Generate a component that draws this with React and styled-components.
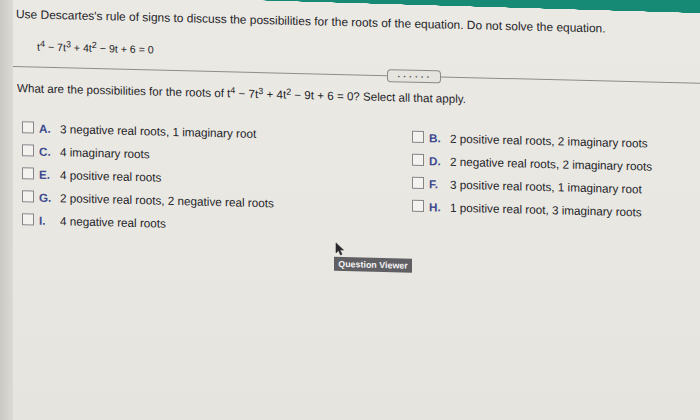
import React from "react";
import styled, { createGlobalStyle } from "styled-components";

const Global = createGlobalStyle`
  html, body { margin: 0; padding: 0; }
  body {
    width: 700px;
    height: 420px;
    overflow: hidden;
    background: #e8e6e1;
    font-family: "Liberation Sans", Arial, sans-serif;
    color: #242428;
  }
`;

const Screen = styled.div`
  display: flex;
  width: 700px;
  height: 420px;
`;

const Edge = styled.div`
  width: 13px;
  flex-shrink: 0;
  background: linear-gradient(90deg, #cbc9c4, #dcdad5);
`;

// photo of a monitor: header strip is cut off at an angle on the right
const Page = styled.div`
  flex: 1;
  overflow: hidden;
  background:
    linear-gradient(to bottom left, #178a76 50%, transparent 50.5%) top right / 450px 13px no-repeat,
    linear-gradient(180deg, #ebe9e4 0%, #e9e7e2 60%, #e6e4df 100%);
`;

const Content = styled.div`
  display: flex;
  flex-direction: column;
  padding: 6px 0 0 3px;
  transform: skewY(1.4deg);
  transform-origin: 0 0;
`;

const Prompt = styled.p`
  margin: 0;
  font-size: 11.95px;
  line-height: 16px;
`;

const Equation = styled.div`
  margin: 17px 0 0 21px;
  font-size: 10.6px;
  line-height: 14px;
  sup { font-size: 9px; vertical-align: 4px; line-height: 0; }
`;

const DividerRow = styled.div`
  display: flex;
  align-items: center;
  margin: 7px 0 0 -3px;
`;

const Rule = styled.div`
  flex: ${(p) => p.grow || 1};
  height: 1px;
  background: #8d8c89;
`;

const Pill = styled.div`
  width: 52px;
  height: 11px;
  border: 1px solid #8b8a88;
  border-radius: 4px;
  background: #e6e4df;
  display: flex;
  align-items: center;
  justify-content: center;
  font-size: 6px;
  color: #555;
  letter-spacing: 1px;
  line-height: 6px;
`;

const Question = styled.p`
  margin: 8px 0 0 1px;
  font-size: 11.6px;
  line-height: 14px;
  sup { font-size: 9px; vertical-align: 4px; line-height: 0; }
`;

const Choices = styled.div`
  display: grid;
  grid-template-columns: 390px 1fr;
  row-gap: 9px;
  margin: 25px 0 0 6px;
`;

const Choice = styled.label`
  display: flex;
  align-items: center;
  font-size: 11.7px;
  height: 14px;
  grid-column: ${(p) => p.col};
`;

const Box = styled.span`
  width: 10px;
  height: 10px;
  border: 1px solid #86868a;
  background: #f3f2ef;
  margin-right: 5px;
  flex-shrink: 0;
`;

const Letter = styled.span`
  width: 21px;
  font-weight: bold;
  color: #3d4a8e;
`;

const ViewerArea = styled.div`
  display: flex;
  justify-content: center;
  margin-top: 8px;
  padding-left: 30px;
`;

const Viewer = styled.div`
  display: flex;
  flex-direction: column;
  align-items: flex-start;
`;

const Cursor = styled.svg`
  width: 10px;
  height: 14px;
  margin: 0 0 1px 1px;
`;

const ViewerTag = styled.div`
  background: #606064;
  color: #f4f4f4;
  font-size: 8.9px;
  font-weight: bold;
  padding: 2.5px 4px;
  line-height: 9px;
`;

const rows = [
  [["A.", "3 negative real roots, 1 imaginary root"], ["B.", "2 positive real roots, 2 imaginary roots"]],
  [["C.", "4 imaginary roots"], ["D.", "2 negative real roots, 2 imaginary roots"]],
  [["E.", "4 positive real roots"], ["F.", "3 positive real roots, 1 imaginary root"]],
  [["G.", "2 positive real roots, 2 negative real roots"], ["H.", "1 positive real root, 3 imaginary roots"]],
  [["I.", "4 negative real roots"]],
];

const Poly = () => (
  <>
    t<sup>4</sup> − 7t<sup>3</sup> + 4t<sup>2</sup> − 9t + 6 = 0
  </>
);

export default function App() {
  return (
    <Screen>
      <Global />
      <Edge />
      <Page>
        <Content>
          <Prompt>
            Use Descartes's rule of signs to discuss the possibilities for the roots of the equation. Do not solve the equation.
          </Prompt>
          <Equation>
            <Poly />
          </Equation>
          <DividerRow>
            <Rule grow={375} />
            <Pill>• • • • • •</Pill>
            <Rule grow={260} />
          </DividerRow>
          <Question>
            What are the possibilities for the roots of <Poly />? Select all that apply.
          </Question>
          <Choices>
            {rows.flat().map(([l, t], i) => (
              <Choice key={l} col={(i % 2) + 1}>
                <Box />
                <Letter>{l}</Letter>
                {t}
              </Choice>
            ))}
          </Choices>
          <ViewerArea>
            <Viewer>
              <Cursor viewBox="0 0 10 14">
                <path d="M1 1 L1 11 L3.5 8.5 L5.5 13 L7 12.3 L5 8 L8.5 8 Z" fill="#2a2a2e" stroke="#2a2a2e" strokeWidth="0.6" strokeLinejoin="round" />
              </Cursor>
              <ViewerTag>Question Viewer</ViewerTag>
            </Viewer>
          </ViewerArea>
        </Content>
      </Page>
    </Screen>
  );
}
